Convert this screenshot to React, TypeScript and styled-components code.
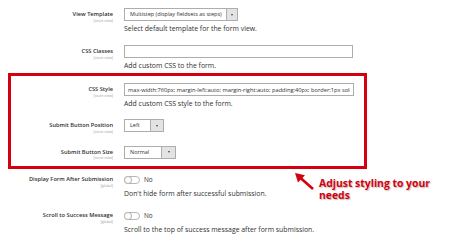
import React from "react";
import styled, { createGlobalStyle } from "styled-components";

const GlobalStyle = createGlobalStyle`
  html, body {
    margin: 0;
    padding: 0;
    background: #fff;
  }
  body {
    font-family: "Open Sans", "Liberation Sans", sans-serif;
    color: #303030;
  }
`;

const Page = styled.div`
  width: 474px;
  height: 245px;
  overflow: hidden;
  padding-top: 8px;
  box-sizing: border-box;
`;

const Row = styled.div<{ $labelWidth?: number; $gap?: number }>`
  display: grid;
  grid-template-columns: ${(p) => p.$labelWidth ?? 113}px 1fr;
  column-gap: 11px;
  align-items: start;
  margin-bottom: ${(p) => p.$gap ?? 12}px;
`;

const LabelCell = styled.div`
  text-align: right;
`;

const Label = styled.div`
  font-size: 5.7px;
  font-weight: 600;
  line-height: 13px;
  color: #303030;
  white-space: nowrap;
`;

const Scope = styled.div`
  font-size: 3.6px;
  line-height: 5px;
  margin-top: -3.5px;
  color: #9a9a9a;
`;

const ControlCell = styled.div`
  display: flex;
  flex-direction: column;
  align-items: flex-start;
`;

const Select = styled.div<{ $width: number }>`
  width: ${(p) => p.$width}px;
  height: 13px;
  box-sizing: border-box;
  border: 1px solid #adadad;
  background: #fff;
  display: flex;
  align-items: stretch;
`;

const SelectValue = styled.span`
  flex: 1;
  padding-left: 5px;
  font-size: 5.5px;
  line-height: 11px;
  color: #303030;
  white-space: nowrap;
  overflow: hidden;
`;

const SelectButton = styled.span<{ $width?: number }>`
  width: ${(p) => p.$width ?? 11}px;
  background: #e3e3e3;
  border-left: 1px solid #adadad;
  display: flex;
  align-items: center;
  justify-content: center;

  &::after {
    content: "";
    border-top: 2px solid #444;
    border-left: 1.5px solid transparent;
    border-right: 1.5px solid transparent;
  }
`;

const TextInput = styled.input<{ $width: number }>`
  width: ${(p) => p.$width}px;
  height: 13px;
  box-sizing: border-box;
  border: 1px solid #adadad;
  border-radius: 0;
  background: #fff;
  margin: 0;
  padding: 0 3px;
  font-family: inherit;
  font-size: 5.7px;
  color: #303030;
  outline: none;
`;

const Note = styled.div`
  font-size: 6.9px;
  line-height: 8px;
  margin-top: 4px;
  color: #303030;
  white-space: nowrap;
`;

const SwitchLine = styled.div`
  height: 13px;
  display: flex;
  align-items: center;
  gap: 4px;
  font-size: 6.4px;
  color: #303030;
`;

const Switch = styled.span`
  position: relative;
  width: 16px;
  height: 8px;
  box-sizing: border-box;
  border: 1px solid #b8b8b8;
  border-radius: 5px;
  background: #fff;

  &::before {
    content: "";
    position: absolute;
    left: -1px;
    top: -1px;
    width: 8px;
    height: 8px;
    box-sizing: border-box;
    border-radius: 50%;
    border: 1px solid #b8b8b8;
    background: #fff;
    box-shadow: 0 0 1px rgba(0, 0, 0, 0.15);
  }
`;

const Highlight = styled.div`
  position: relative;
  width: 359px;
  margin: 0 0 4px 8px;
  box-sizing: border-box;
  border: 3px solid #d4000f;
  padding: 7px 0 6px;
`;

const Callout = styled.div`
  position: absolute;
  left: 279px;
  top: 92px;
  display: flex;
  align-items: flex-start;
  pointer-events: none;
`;

const CalloutText = styled.div`
  margin-top: 8.7px;
  margin-left: -1px;
  font-size: 10.4px;
  font-weight: 700;
  line-height: 12.5px;
  color: #d4000f;
  white-space: nowrap;
  text-shadow: 1px 1px 1px rgba(110, 110, 110, 0.45);
`;

type FieldProps = {
  label: string;
  scope?: string;
  labelWidth?: number;
  gap?: number;
  children: React.ReactNode;
};

function Field({ label, scope = "[store view]", labelWidth, gap, children }: FieldProps) {
  return (
    <Row $labelWidth={labelWidth} $gap={gap}>
      <LabelCell>
        <Label>{label}</Label>
        <Scope>{scope}</Scope>
      </LabelCell>
      <ControlCell>{children}</ControlCell>
    </Row>
  );
}

function Dropdown({ value, width, button }: { value: string; width: number; button?: number }) {
  return (
    <Select $width={width}>
      <SelectValue>{value}</SelectValue>
      <SelectButton $width={button} />
    </Select>
  );
}

function Arrow() {
  return (
    <svg width="30" height="26" viewBox="0 0 30 26">
      <line x1="10" y1="9.5" x2="23" y2="21" stroke="#d4000f" strokeWidth="2.6" />
      <polygon points="5,5 15,7.2 8,14.6" fill="#d4000f" />
    </svg>
  );
}

export default function App() {
  return (
    <>
      <GlobalStyle />
      <Page>
        <Field label="View Template">
          <Dropdown value="Multistep (display fieldsets as steps)" width={114} button={10} />
          <Note>Select default template for the form view.</Note>
        </Field>

        <Field label="CSS Classes" gap={3}>
          <TextInput $width={229} readOnly defaultValue="" />
          <Note>Add custom CSS to the form.</Note>
        </Field>

        <Highlight>
          <Field label="CSS Style" labelWidth={102} gap={11}>
            <TextInput
              $width={230}
              readOnly
              defaultValue="max-width:760px; margin-left:auto; margin-right:auto; padding:40px; border:1px solid #ccc"
            />
            <Note>Add custom CSS style to the form.</Note>
          </Field>

          <Field label="Submit Button Position" labelWidth={102}>
            <Dropdown value="Left" width={40} button={12} />
          </Field>

          <Field label="Submit Button Size" labelWidth={102} gap={0}>
            <Dropdown value="Normal" width={52} button={13} />
          </Field>

          <Callout>
            <Arrow />
            <CalloutText>
              Adjust styling to your
              <br />
              needs
            </CalloutText>
          </Callout>
        </Highlight>

        <Field label="Display Form After Submission" scope="[global]" gap={11}>
          <SwitchLine>
            <Switch />
            No
          </SwitchLine>
          <Note>Don't hide form after successful submission.</Note>
        </Field>

        <Field label="Scroll to Success Message" scope="[global]">
          <SwitchLine>
            <Switch />
            No
          </SwitchLine>
          <Note>Scroll to the top of success message after form submission.</Note>
        </Field>
      </Page>
    </>
  );
}
